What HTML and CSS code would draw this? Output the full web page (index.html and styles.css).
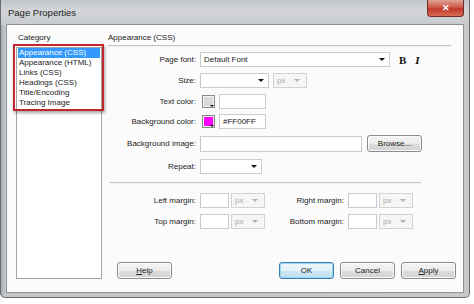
FILE: index.html
```html
<!DOCTYPE html>
<html lang="en">
<head>
    <meta charset="UTF-8">
    <meta name="viewport" content="width=device-width, initial-scale=1.0">
    <title>Page Properties</title>
    <link rel="stylesheet" href="styles.css">
</head>
<body>
    <div class="window">
        <div class="titlebar">
            <span class="title">Page Properties</span>
            <span class="close">&#x2715;</span>
        </div>

        <div class="client">
            <div class="cat-col">
                <div class="cat-label">Category</div>
                <ul class="cat-list">
                    <li class="selected">Appearance (CSS)</li>
                    <li>Appearance (HTML)</li>
                    <li>Links (CSS)</li>
                    <li>Headings (CSS)</li>
                    <li>Title/Encoding</li>
                    <li>Tracing Image</li>
                </ul>
                <div class="callout"></div>
            </div>

            <div class="main-col">
                <div class="section-title">Appearance (CSS)</div>
                <div class="rule rule-top"></div>

                <div class="row row-font">
                    <span class="label">Page font:</span>
                    <div class="select w-font"><span>Default Font</span><span class="arrow"></span></div>
                    <span class="style-btn bold">B</span>
                    <span class="style-btn italic">I</span>
                </div>

                <div class="row row-size">
                    <span class="label">Size:</span>
                    <div class="select w-size"><span></span><span class="arrow"></span></div>
                    <div class="select unit disabled"><span>px</span><span class="arrow"></span></div>
                </div>

                <div class="row row-text">
                    <span class="label">Text color:</span>
                    <span class="swatch swatch-gray"></span>
                    <div class="input w-color"></div>
                </div>

                <div class="row row-bg">
                    <span class="label">Background color:</span>
                    <span class="swatch swatch-magenta"></span>
                    <div class="input w-color">#FF00FF</div>
                </div>

                <div class="row row-image">
                    <span class="label">Background image:</span>
                    <div class="input w-image"></div>
                    <button class="btn browse">Browse...</button>
                </div>

                <div class="row row-repeat">
                    <span class="label">Repeat:</span>
                    <div class="select w-repeat"><span></span><span class="arrow"></span></div>
                </div>

                <div class="rule rule-mid"></div>

                <div class="row row-margin1">
                    <span class="label">Left margin:</span>
                    <div class="input w-margin"></div>
                    <div class="select unit disabled"><span>px</span><span class="arrow"></span></div>
                    <span class="label label2">Right margin:</span>
                    <div class="input w-margin"></div>
                    <div class="select unit disabled"><span>px</span><span class="arrow"></span></div>
                </div>

                <div class="row row-margin2">
                    <span class="label">Top margin:</span>
                    <div class="input w-margin"></div>
                    <div class="select unit disabled"><span>px</span><span class="arrow"></span></div>
                    <span class="label label2">Bottom margin:</span>
                    <div class="input w-margin"></div>
                    <div class="select unit disabled"><span>px</span><span class="arrow"></span></div>
                </div>

                <div class="buttons">
                    <button class="btn"><u>H</u>elp</button>
                    <div class="btn-group">
                        <button class="btn ok">OK</button>
                        <button class="btn">Cancel</button>
                        <button class="btn"><u>A</u>pply</button>
                    </div>
                </div>
            </div>
        </div>
    </div>
</body>
</html>
```

FILE: styles.css
```css
body {
    margin: 0;
    background: #ffffff;
    font-family: "Liberation Sans", Arial, sans-serif;
    font-size: 8px;
    color: #222;
}

.window {
    width: 468px;
    height: 297px;
    border: 1px solid #6c6c6c;
    border-top: none;
    border-radius: 0 0 5px 5px;
    background: linear-gradient(to right, #a9acb0 0px, #c4c7ca 4px, #c6c9cc 100%);
    display: flex;
    flex-direction: column;
}

.titlebar {
    height: 25px;
    display: flex;
    align-items: flex-start;
    background: linear-gradient(to bottom, #c2c5c9, #d3d5d8 40%, #c8cbce);
}
.title {
    margin: 7px 0 0 7px;
    font-size: 9.5px;
    color: #1e1e1e;
}
.close {
    margin-left: auto;
    margin-right: 5px;
    width: 37px;
    height: 17px;
    border: 1px solid #6e2c2c;
    border-top: none;
    border-radius: 0 0 4px 4px;
    background: linear-gradient(to bottom, #e1a396, #cf5a48 45%, #c0392b 55%, #d86c55);
    color: #fff;
    font-size: 9px;
    font-weight: bold;
    text-align: center;
    line-height: 16px;
    box-sizing: border-box;
}

.client {
    flex: 1;
    margin: 0 6px 5px 6px;
    background: #fbfbfb;
    box-shadow: 0 0 0 1px #8e9093;
    display: flex;
    gap: 6px;
    padding: 8px 7px 13px 9px;
}

.cat-col {
    width: 86px;
    display: flex;
    flex-direction: column;
    position: relative;
}
.cat-label {
    line-height: 10px;
    padding-left: 2px;
    margin-bottom: 4px;
}
.cat-list {
    flex: 1;
    margin: 0;
    padding: 0 1px;
    list-style: none;
    background: #fff;
    border: 1px solid #a3a3a3;
}
.cat-list li {
    line-height: 10px;
    height: 10px;
    padding-left: 1px;
    white-space: nowrap;
}
.cat-list li.selected {
    background: #3399ff;
    color: #fff;
}
.callout {
    position: absolute;
    left: -3px;
    top: 11px;
    width: 91px;
    height: 67px;
    box-sizing: border-box;
    border: 2px solid #c1272d;
    box-shadow: 1px 2px 3px rgba(0, 0, 0, 0.35);
}

.main-col {
    flex: 1;
    display: flex;
    flex-direction: column;
}
.section-title {
    line-height: 10px;
}
.rule {
    height: 1px;
    background: #c3c3c3;
    border-bottom: 1px solid #f2f2f2;
}
.rule-top {
    margin: 2px 5px 0 0;
}
.rule-mid {
    margin: 8px 0 0 2px;
    width: 311px;
}

.row {
    display: flex;
    align-items: center;
    height: 15px;
}
.row-font { margin-top: 5px; }
.row-size { margin-top: 6px; }
.row-text { margin-top: 6px; }
.row-bg { margin-top: 5px; }
.row-image { margin-top: 6px; height: 17px; }
.row-repeat { margin-top: 7px; }
.row-margin1 { margin-top: 9px; }
.row-margin2 { margin-top: 6px; }

.label {
    width: 88px;
    margin-right: 4px;
    text-align: right;
    white-space: nowrap;
}
.label2 {
    width: 79px;
    margin-left: 0;
}

.select, .input {
    height: 15px;
    box-sizing: border-box;
    border: 1px solid #cbcbcb;
    background: #fff;
    display: flex;
    align-items: center;
    padding: 0 3px;
    white-space: nowrap;
}
.select {
    justify-content: space-between;
}
.arrow {
    width: 0;
    height: 0;
    border-left: 3px solid transparent;
    border-right: 3px solid transparent;
    border-top: 3px solid #111;
    margin-right: 1px;
}
.select.disabled {
    background: #f6f6f6;
    border-color: #d3d3d3;
    color: #a6a6a6;
}
.select.disabled .arrow {
    border-top-color: #b3b3b3;
    margin-right: 3px;
}

.w-font { width: 190px; }
.w-size { width: 69px; margin-right: 2px; }
.unit { width: 34px; margin-left: 2px; }
.w-color { width: 47px; margin-left: 4px; }
.w-image { width: 162px; height: 16px; }
.w-repeat { width: 62px; }
.w-margin { width: 29px; }

.style-btn {
    font-family: "Liberation Serif", "Times New Roman", serif;
    font-weight: bold;
    font-size: 11px;
    color: #111;
}
.bold { margin-left: 9px; }
.italic { margin-left: 9px; font-style: italic; }

.swatch {
    width: 13px;
    height: 13px;
    box-sizing: border-box;
    margin-left: 2px;
    border: 1px solid #8a8a8a;
    position: relative;
    box-shadow: inset 0 0 0 1px #f4f4f4;
}
.swatch::after {
    content: "";
    position: absolute;
    right: 0;
    bottom: 0;
    width: 0;
    height: 0;
    border-left: 2px solid transparent;
    border-right: 2px solid transparent;
    border-top: 2px solid #000;
}
.swatch-gray { background: #d9d9d9; }
.swatch-magenta { background: #ff00ff; }

.btn {
    font-family: "Liberation Sans", Arial, sans-serif;
    font-size: 8px;
    color: #222;
    width: 55px;
    height: 17px;
    padding: 0;
    border: 1px solid #8b8b8b;
    border-radius: 3px;
    background: linear-gradient(to bottom, #f4f4f4 0%, #ececec 50%, #dcdcdc 51%, #d2d2d2 100%);
    box-shadow: inset 0 0 0 1px #fafafa;
}
.btn u {
    text-decoration: underline;
}
.browse {
    margin-left: 5px;
}
.ok {
    border-color: #3c7fb1;
    background: linear-gradient(to bottom, #eef7fc 0%, #e2f0f9 50%, #cfe6f4 51%, #c1dff0 100%);
    box-shadow: inset 0 0 0 1px #9bd5f4;
}

.buttons {
    margin-top: auto;
    display: flex;
    justify-content: space-between;
    padding-left: 9px;
}
.btn-group {
    display: flex;
    gap: 6px;
}
```
